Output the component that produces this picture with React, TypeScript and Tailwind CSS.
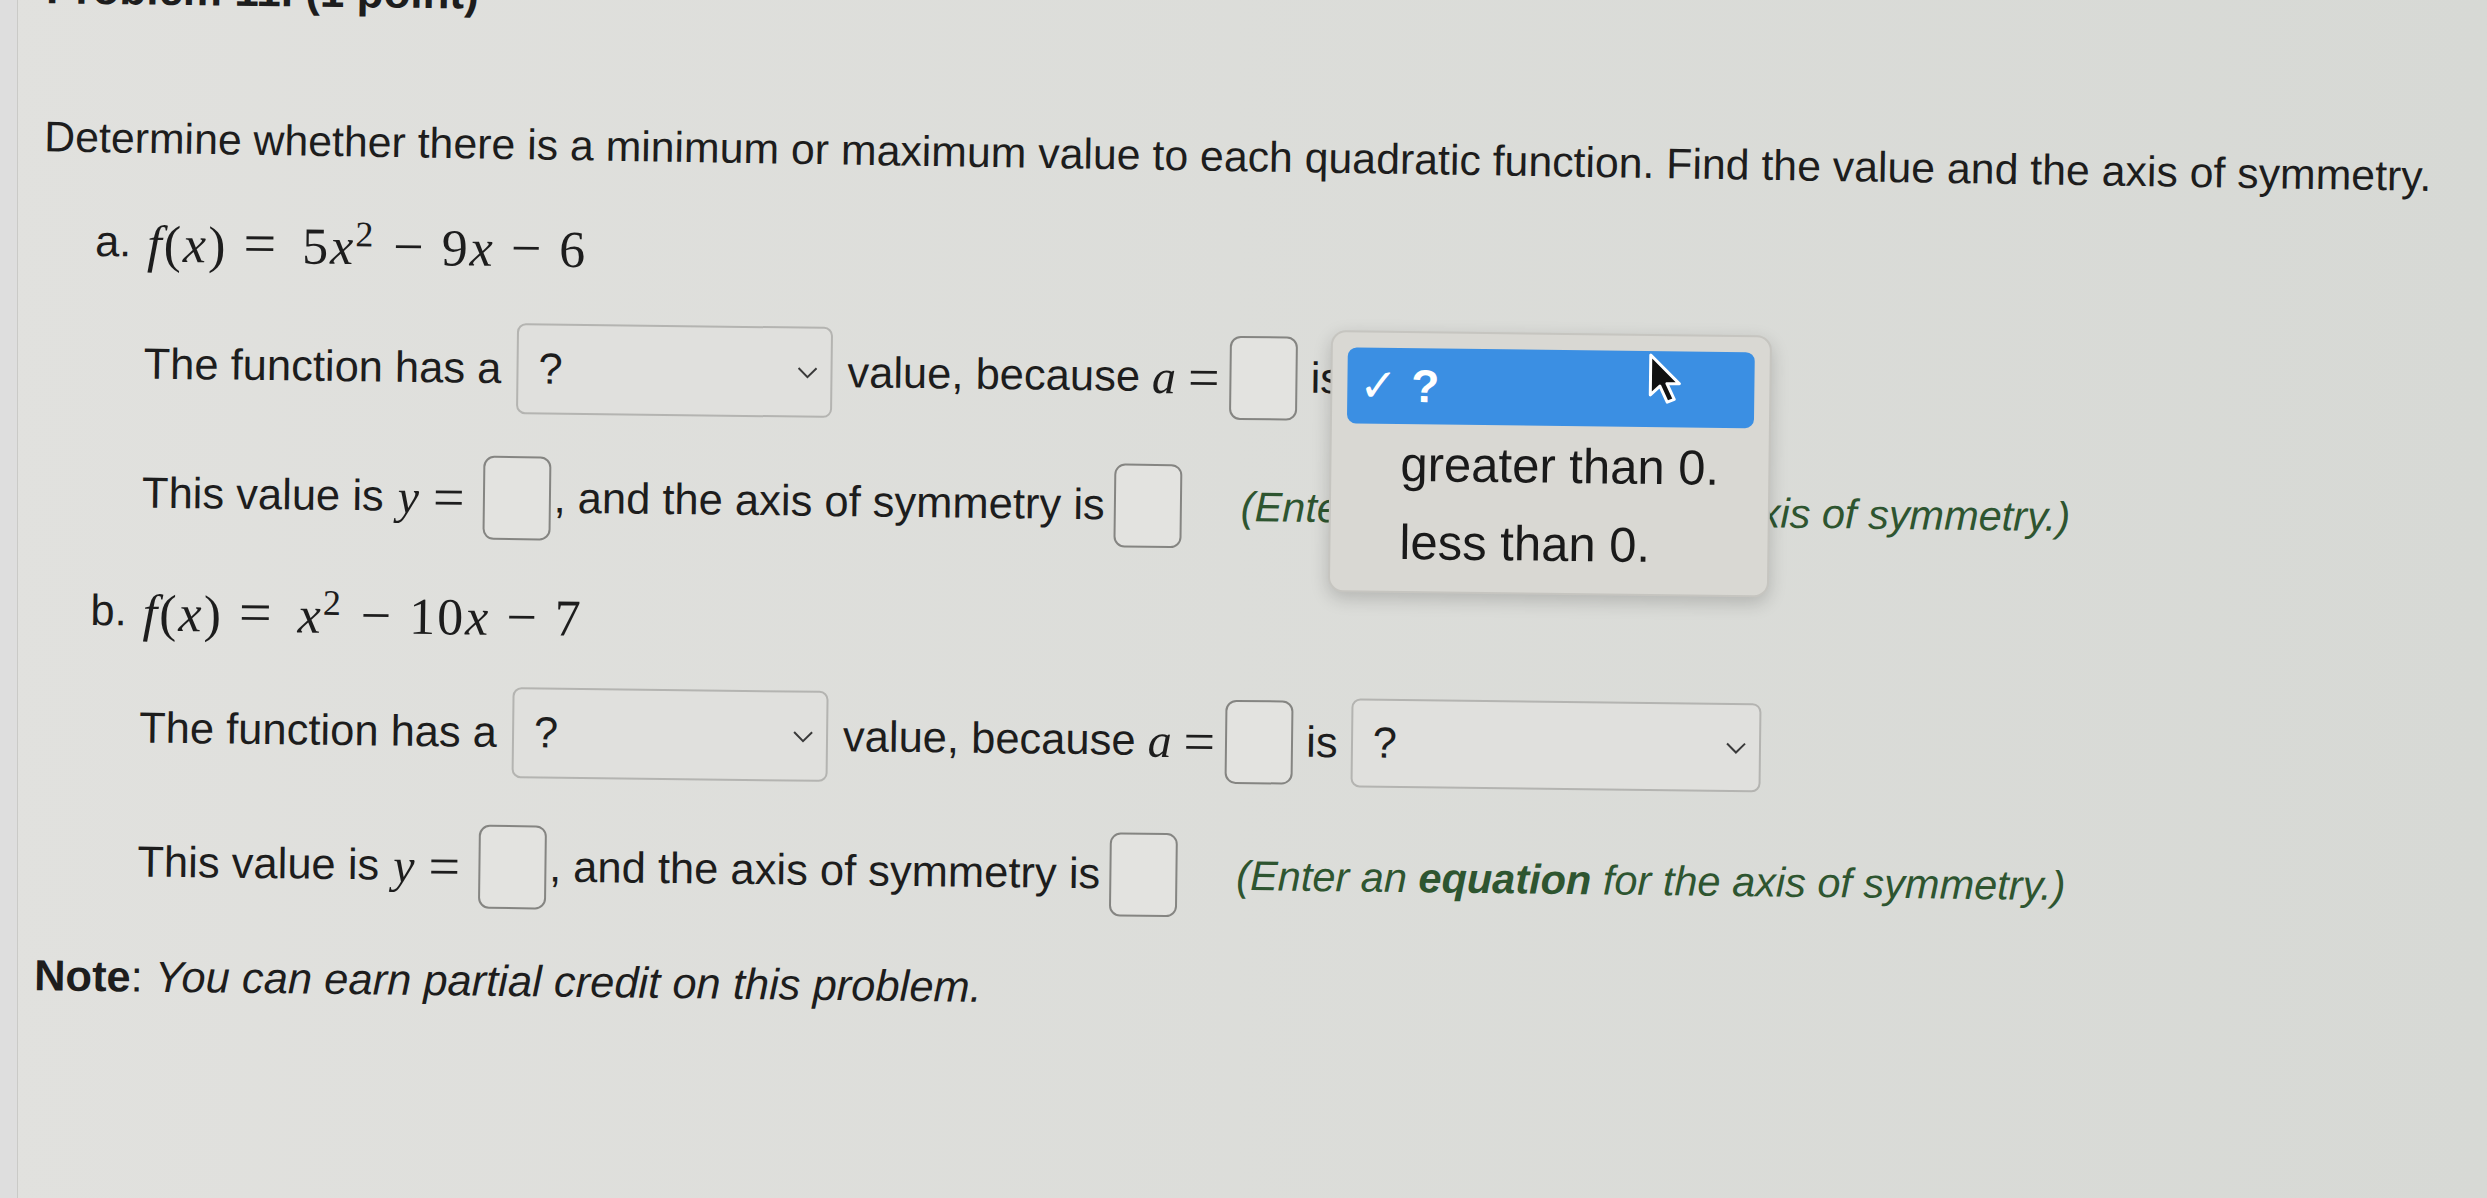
import React from "react"

const sans = "font-['Liberation_Sans',Arial,sans-serif]"
const serif = "font-['Liberation_Serif','Times_New_Roman',serif]"

function Chevron() {
  return (
    <svg width="22" height="14" viewBox="0 0 22 14" className="shrink-0">
      <polyline points="2,2.5 11,11.5 20,2.5" fill="none" stroke="#3a3a3a" strokeWidth="2" />
    </svg>
  )
}

function Select({ className }: { className: string }) {
  return (
    <div className={`flex items-center justify-between rounded-[9px] border-2 border-[#b4b4b1] bg-[#e0e0dd] pl-[20px] pr-[12px] ${className}`}>
      <span>?</span>
      <Chevron />
    </div>
  )
}

function Box({ className = "" }: { className?: string }) {
  return <div className={`h-[84px] w-[68px] shrink-0 rounded-[11px] border-2 border-[#858582] bg-[#e3e3e0] ${className}`} />
}

function M({ children, className = "" }: { children: React.ReactNode; className?: string }) {
  return <span className={`${serif} italic ${className}`}>{children}</span>
}

function Eqs({ className = "" }: { className?: string }) {
  return <span className={`${serif} text-[56px] leading-none ${className}`}>=</span>
}

function Cursor() {
  return (
    <svg width="36" height="54" viewBox="0 0 36 54" className="absolute left-[300px] top-[2px]">
      <path d="M3 2 L3 42 L12.5 33 L20 49 L27 46 L19.5 30.5 L32 30.5 Z" fill="#111" stroke="#fff" strokeWidth="3" strokeLinejoin="round" />
    </svg>
  )
}

function Menu() {
  return (
    <div className="absolute left-[1317px] top-[314px] w-[441px] rounded-[15px] border-2 border-[#c6c5c0] bg-[#d9d8d3] px-[15px] pb-[15px] pt-[15px] shadow-[0_6px_18px_rgba(0,0,0,0.18)]">
      <div className="relative flex h-[76px] items-center rounded-[9px] bg-[#3b8fe3] pl-[12px] text-[46px] text-white">
        <span>
          ✓ <b className="font-bold">?</b>
        </span>
        <Cursor />
      </div>
      <div className="flex h-[76px] items-center pl-[54px] pt-[6px] text-[49px] text-[#1a1a1a]">greater than 0.</div>
      <div className="flex h-[76px] items-center pl-[54px] pt-[10px] text-[49px] text-[#1a1a1a]">less than 0.</div>
    </div>
  )
}

function Eq({ children }: { children: React.ReactNode }) {
  return <span className={`${serif} ml-[16px] text-[52px] leading-none tracking-[2px]`}>{children}</span>
}

function Minus() {
  return <span className="mx-[16px] text-[54px]">−</span>
}

function Hint() {
  return (
    <span className="text-[41.5px] italic text-[#2e5530]">
      (Enter an <b className="font-bold">equation</b> for the axis of symmetry.)
    </span>
  )
}

function RowOne({ second }: { second?: boolean }) {
  return (
    <div className="flex h-[91px] items-center">
      <span>The function has a</span>
      <Select className="ml-[15px] h-[91px] w-[316px]" />
      <span className="ml-[15px]">value, because</span>
      <M className="ml-[12px] text-[48px]">a</M>
      <Eqs className="ml-[12px]" />
      <Box className="ml-[10px]" />
      <span className="ml-[13px]">is</span>
      {second && <Select className="ml-[13px] h-[89px] w-[410px]" />}
    </div>
  )
}

function RowTwo() {
  return (
    <div className="flex h-[84px] items-center">
      <span>This value is</span>
      <M className="ml-[14px] text-[48px]">y</M>
      <Eqs className="ml-[14px]" />
      <Box className="ml-[18px]" />
      <span className="ml-[3px]">, and the axis of symmetry is</span>
      <Box className="ml-[9px]" />
      <span className="ml-[59px]">
        <Hint />
      </span>
    </div>
  )
}

export default function App() {
  return (
    <div className={`relative flex h-[1198px] w-[2487px] overflow-hidden bg-linear-to-r from-[#e1e1de] to-[#d7d9d5] ${sans} text-[43.5px] text-[#1d1d1d]`}>
      <div className="w-[18px] shrink-0 border-r border-[#cacac7] bg-[#dedede]" />

      <div className="relative flex flex-1 origin-top-left rotate-[0.7deg] flex-col pl-[28px]">
        <div className="-mt-[34px] text-[44px] font-bold leading-[44px]">Problem 11. (1 point)</div>

        <p className="mt-[101px] origin-left rotate-[0.25deg] text-[42.8px] leading-[50px]">
          Determine whether there is a minimum or maximum value to each quadratic function. Find the value and the axis of symmetry.
        </p>

        <div className="ml-[52px] mt-[55px] flex h-[50px] items-center">
          <span>a.</span>
          <Eq>
            <i>f</i>(<i>x</i>)<span className="ml-[16px] mr-[24px] text-[58px]">=</span>5<i>x</i>
            <sup className="mr-[2px] text-[36px]">2</sup>
            <Minus />9<i>x</i>
            <Minus />6
          </Eq>
        </div>

        <div className="ml-[102px] mt-[51px]">
          <RowOne />
        </div>

        <div className="ml-[102px] mt-[42px]">
          <RowTwo />
        </div>

        <div className="ml-[52px] mt-[51px] flex h-[50px] items-center">
          <span>b.</span>
          <Eq>
            <i>f</i>(<i>x</i>)<span className="ml-[16px] mr-[24px] text-[58px]">=</span>
            <i>x</i>
            <sup className="mr-[2px] text-[36px]">2</sup>
            <Minus />10<i>x</i>
            <Minus />7
          </Eq>
        </div>

        <div className="ml-[102px] mt-[46px]">
          <RowOne second />
        </div>

        <div className="ml-[102px] mt-[47px]">
          <RowTwo />
        </div>

        <div className="mt-[47px] leading-[50px]">
          <b className="font-bold">Note</b>: <i>You can earn partial credit on this problem.</i>
        </div>

        <Menu />
      </div>
    </div>
  )
}
